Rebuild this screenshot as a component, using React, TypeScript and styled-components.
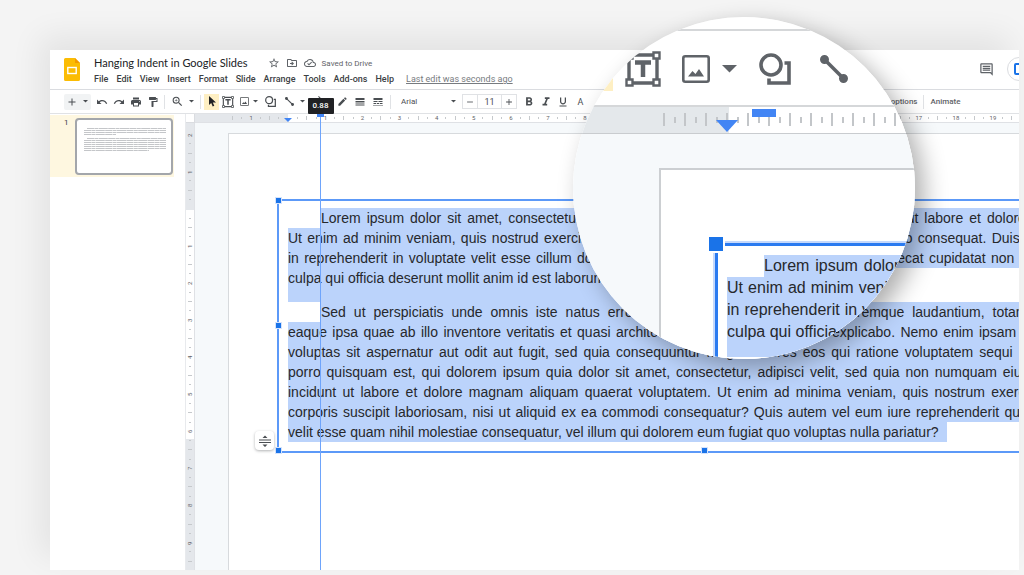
import React from "react";
import styled, { createGlobalStyle, css } from "styled-components";
import {
  MdAdd, MdRemove, MdPrint, MdFormatPaint, MdZoomIn, MdEdit, MdLineWeight,
  MdLineStyle, MdFormatBold, MdFormatItalic, MdFormatUnderlined, MdStarBorder,
  MdOutlineDriveFileMove, MdOutlineCloudDone, MdOutlineInsertComment, MdFormatColorFill,
} from "react-icons/md";

const GlobalStyle = createGlobalStyle`
  *, *::before, *::after { box-sizing: border-box; }
  body { margin: 0; background: #f4f4f4; font-family: Roboto, sans-serif; color: #3c4043; }
  button, input, select { font: inherit; color: inherit; margin: 0; padding: 0; border: 0; background: none; }
  svg { display: block; flex: none; }
`;

/* ---------- window frame ---------- */

const Page = styled.div`
  position: relative;
  display: flex;
  height: 100vh;
  padding: 50px 5px 5px 50px;
  overflow: hidden;
`;

const AppWindow = styled.div`
  flex: 1;
  min-width: 0;
  display: flex;
  flex-direction: column;
  background: #fff;
  overflow: hidden;
  box-shadow: -10px -14px 30px rgba(0, 0, 0, 0.07);
`;

/* ---------- header ---------- */

const Header = styled.header`
  display: flex;
  height: 40px;
  padding: 5px 0 0 14px;
  border-bottom: 1px solid #dadce0;
`;

const Logo = styled.a`
  padding-top: 3px;
  width: 30px;
`;

const HeaderText = styled.div`
  display: flex;
  flex-direction: column;
`;

const TitleRow = styled.div`
  display: flex;
  align-items: center;
  height: 16px;
  color: #5f6368;
`;

const DocTitle = styled.h1`
  margin: 0 20px 0 0;
  font: 400 11px/16px Lato, sans-serif;
  color: #202124;
  white-space: nowrap;
`;

const TitleButton = styled.button`
  width: 18px;
  display: flex;
`;

const SavedNote = styled.span`
  font-size: 8px;
  white-space: nowrap;
`;

const MenuBar = styled.nav`
  display: flex;
  align-items: center;
  height: 16px;
  gap: 8px;
  font-size: 9px;
  font-weight: 500;
  white-space: nowrap;
`;

const LastEdit = styled.a`
  margin-left: 4px;
  font-weight: 400;
  color: #777b80;
  text-decoration: underline;
`;

const HeaderActions = styled.div`
  display: flex;
  align-items: center;
  height: 28px;
  gap: 13px;
  margin: 0 -20px 0 auto;
  color: #5f6368;
`;

const PresentButton = styled.button`
  width: 32px;
  height: 24px;
  display: flex;
  align-items: center;
  padding-left: 6px;
  border: 1px solid #dadce0;
  border-radius: 12px;
  color: #1a73e8;
`;

/* ---------- toolbar ---------- */

const Toolbar = styled.div`
  display: flex;
  align-items: center;
  height: 24px;
  flex: none;
  padding-left: 14px;
  border-bottom: 1px solid #e0e2e5;
  color: #4a4e52;
  font-size: 9px;
`;

const Tool = styled.button<{ $w: number; $active?: boolean }>`
  width: ${(p) => p.$w}px;
  height: 16px;
  flex: none;
  display: flex;
  align-items: center;
  justify-content: center;
  ${(p) => p.$active && css`background: #feefc3; color: #202124;`}
`;

const NewSlide = styled.div`
  display: flex;
  background: #f1f3f4;
  margin-right: 2px;
  border-radius: 2px;
`;

const Divider = styled.span`
  width: 1px;
  height: 14px;
  flex: none;
  margin: 0 3px;
  background: #e0e2e5;
`;

const FontPicker = styled.label`
  display: flex;
  align-items: center;
  width: 65px;
  margin-right: 3px;
  padding: 0 3px 0 7px;
  font-size: 8px;
`;

const FontSelect = styled.select`
  appearance: none;
  flex: 1;
  min-width: 0;
`;

const SizeBox = styled.div`
  display: flex;
  align-items: center;
  width: 55px;
  height: 15px;
  margin-right: 3px;
  border: 1px solid #e0e2e5;
`;

const SizeInput = styled.input`
  width: 25px;
  height: 13px;
  text-align: center;
  font-size: 9px;
  border: solid #e0e2e5;
  border-width: 0 1px;
`;

const TextTools = styled.div`
  display: flex;
  align-items: center;
  margin-left: 270px;
  font-size: 8px;
  font-weight: 500;
  color: #5f6368;
  white-space: nowrap;
`;

const TextTool = styled.button`
  padding: 0 3px;
`;

/* ---------- workspace ---------- */

const Workspace = styled.div`
  flex: 1;
  min-height: 0;
  display: flex;
`;

const Filmstrip = styled.aside`
  width: 136px;
  flex: none;
  padding-top: 1px;
  border-right: 1px solid #e8eaed;
`;

const SlideEntry = styled.button`
  display: flex;
  width: 124px;
  height: 62px;
  padding: 3px 0 0 14px;
  font-size: 8px;
  background: #fef7e0;
  text-align: left;
`;

const Thumbnail = styled.span`
  width: 98px;
  height: 57px;
  margin-left: 6px;
  border: 2px solid #a3a6ab;
  border-radius: 4px;
  background: #fff;
`;

const Editor = styled.section`
  flex: 1;
  min-width: 0;
  display: flex;
  flex-direction: column;
`;

const TopRow = styled.div`
  display: flex;
  height: 9px;
  flex: none;
`;

const BottomRow = styled.div`
  position: relative;
  display: flex;
  flex: 1;
  min-height: 0;
`;

const Corner = styled.span`
  width: 9px;
  flex: none;
  background: #fff;
  border: solid #dadce0;
  border-width: 0 1px 1px 0;
`;

const HRuler = styled.div`
  position: relative;
  flex: 1;
  min-width: 0;
  overflow: hidden;
  padding-left: 33px;
  border-bottom: 1px solid #dfe1e5;
  background: linear-gradient(90deg, #e4e7eb 93px, #fff 93px);
`;

const HScale = styled.div`
  display: grid;
  width: 816px;
  height: 8px;
  grid-template-columns: repeat(88, 1fr);
  place-items: center;
  font-size: 6px;
  line-height: 8px;
  color: #5f6368;
`;

const VRuler = styled.div`
  width: 9px;
  flex: none;
  overflow: hidden;
  padding-top: 7px;
  border-right: 1px solid #dfe1e5;
  background: linear-gradient(#e4e7eb 87px, #fff 87px, #fff 316px, #e4e7eb 316px);
`;

const VScale = styled.div`
  display: grid;
  height: 445px;
  grid-template-rows: repeat(48, 1fr);
  place-items: center;
  font-size: 6px;
  line-height: 8px;
  color: #5f6368;
`;

const Mark = styled.i<{ $long?: boolean; $vertical?: boolean }>`
  width: ${(p) => (p.$vertical ? (p.$long ? 4 : 2) : 1)}px;
  height: ${(p) => (p.$vertical ? 1 : p.$long ? 4 : 2)}px;
  background: #c6c9cc;
`;

const Figure = styled.span<{ $vertical?: boolean }>`
  ${(p) => p.$vertical && css`
    writing-mode: vertical-rl;
    transform: rotate(180deg);
    height: 8px;
    text-align: center;
  `}
`;

const IndentHandle = styled.svg`
  position: absolute;
  left: 89px;
  top: 4px;
`;

const Canvas = styled.div`
  flex: 1;
  min-width: 0;
  padding: 10px 0 0 33px;
  background: #f6f9fb;
  display: flex;
`;

const Slide = styled.div`
  flex: 1;
  min-width: 0;
  overflow: hidden;
  padding: 65px 0 0 48px;
  background: #fff;
  border: solid #d7dadd;
  border-width: 1px 0 0 1px;
`;

const TextBox = styled.div`
  position: relative;
  width: 856px;
  height: 254px;
  padding: 7px 9px;
  border: 2px solid #5c99f8;
`;

const Handle = styled.span<{ $x: string; $y: string }>`
  position: absolute;
  left: ${(p) => p.$x};
  top: ${(p) => p.$y};
  width: 5px;
  height: 5px;
  margin: -3px 0 0 -3px;
  background: #1a73e8;
  outline: 1px solid #d5e3fc;
`;

const Paragraph = styled.p<{ $large?: boolean }>`
  margin: 0;
  width: ${(p) => (p.$large ? 934 : 834)}px;
  font-family: "Liberation Sans", Arial, sans-serif;
  font-size: ${(p) => (p.$large ? 16 : 14)}px;
  line-height: ${(p) => (p.$large ? 22 : 20)}px;
  color: #26282c;
  white-space: nowrap;
`;

const Line = styled.span<{ $indent?: number; $last?: boolean; $end?: boolean }>`
  display: block;
  margin-left: ${(p) => p.$indent ?? 0}px;
  background: #bbd3fb;
  text-align-last: justify;
  ${(p) => (p.$last || p.$end) && css`width: fit-content; padding-right: 8px; text-align-last: left;`}
  ${(p) => p.$last && css`padding-bottom: 14px;`}
`;

const SpacingButton = styled.button`
  position: absolute;
  left: 69px;
  top: 308px;
  width: 19px;
  height: 19px;
  display: grid;
  place-items: center;
  border-radius: 4px;
  background: #fff;
  box-shadow: 0 1px 3px rgba(60, 64, 67, 0.4);
`;

const Guide = styled.div`
  position: absolute;
  left: 320px;
  top: 98px;
  bottom: 5px;
  width: 1px;
  display: flex;
  flex-direction: column;
  align-items: center;
  background: #6ea4fb;
`;

const GuideValue = styled.output`
  width: 26px;
  height: 16px;
  flex: none;
  border-radius: 1px;
  background: #202124;
  color: #fff;
  font: 500 8px/16px Roboto, sans-serif;
  text-align: center;
`;

const GuideTab = styled.span`
  width: 7px;
  height: 3px;
  flex: none;
  background: #4285f4;
`;

/* ---------- magnifier ---------- */

const Lens = styled.div`
  position: absolute;
  left: 573px;
  top: 17px;
  width: 342px;
  height: 342px;
  overflow: hidden;
  border-radius: 50%;
  background: #fff;
  display: flex;
  flex-direction: column;
`;

const LensShadow = styled.div`
  position: absolute;
  left: 573px;
  top: 17px;
  width: 342px;
  height: 342px;
  border-radius: 50%;
  box-shadow: 9px 9px 24px rgba(0, 0, 0, 0.32);
`;

const LensToolbar = styled.div`
  display: flex;
  align-items: center;
  height: 78px;
  flex: none;
  margin-top: 12px;
  padding-top: 2px;
  border: solid #d5d7d9;
  border-width: 2px 0;
  color: #5f6368;
`;

const LensSelected = styled.span`
  width: 40px;
  height: 44px;
  margin-right: 12px;
  background: #feefc3;
`;

const LensIcon = styled.span<{ $gap: number }>`
  margin-right: ${(p) => p.$gap}px;
`;

const LensRuler = styled.div`
  height: 27px;
  flex: none;
  border-bottom: 1px solid #c9cccf;
  background: linear-gradient(90deg, #e4e8eb 156px, #fff 156px);
`;

const LensCanvas = styled.div`
  flex: 1;
  display: flex;
  padding: 34px 0 0 86px;
  background: #f6f9fb;
`;

const LensSlide = styled.div`
  flex: none;
  width: 1100px;
  padding: 73px 0 0 54px;
  border: solid #cccfd2;
  border-width: 2px 0 0 2px;
  background: #fff;
`;

const LensBox = styled.div`
  position: relative;
  padding: 9px 0 30px 9px;
  border: 3px solid #2b7bf0;
  outline: 2px solid #c5d9fc;
`;

const LensHandle = styled.span`
  position: absolute;
  left: -9px;
  top: -9px;
  width: 14px;
  height: 14px;
  background: #1a73e8;
  box-shadow: 0 0 0 2px #fff;
`;

/* ---------- drawings ---------- */

const Caret = ({ size = 5 }: { size?: number }) => (
  <svg width={size} height={size / 2} viewBox="0 0 10 5"><path d="M0 0h10L5 5z" fill="currentColor" /></svg>
);

const TurnIcon = ({ flip }: { flip?: boolean }) => (
  <svg width="12" height="12" viewBox="0 0 24 24">
    <path
      d="M12.500 8c-2.650 0-5.050.99-6.900 2.600L2 7v9h9l-3.620-3.620c1.390-1.160 3.160-1.880 5.120-1.880 3.540 0 6.550 2.310 7.600 5.500l2.370-.78C21.080 11.030 17.150 8 12.500 8z"
      fill="currentColor"
      transform={flip ? "translate(24 0) scale(-1 1)" : undefined}
    />
  </svg>
);

const TextBoxIcon = ({ size }: { size: number }) => (
  <svg width={size} height={size} viewBox="0 0 36 36" fill="none" stroke="currentColor">
    <path d="M8 4h20M4 8v20M8 32h20M32 8v20" strokeWidth="3.4" />
    <path d="M10 11.500h16M18 11v15" strokeWidth="4.500" />
    <path d="M1.500 1.500h6v6h-6zM28.500 1.500h6v6h-6zM1.500 28.500h6v6h-6zM28.500 28.500h6v6h-6z" strokeWidth="2.400" />
  </svg>
);

const PhotoIcon = ({ size }: { size: number }) => (
  <svg width={size} height={size} viewBox="0 0 28 28">
    <rect x="1.300" y="1.300" width="25.400" height="25.400" rx="2" fill="none" stroke="currentColor" strokeWidth="2.600" />
    <path d="M6 21.500l4.500-5.500 3 3 3.500-5 5 7.500z" fill="currentColor" />
  </svg>
);

const ShapesIcon = ({ size }: { size: number }) => (
  <svg width={size} height={size} viewBox="0 0 32 32" fill="none" stroke="currentColor" strokeWidth="3.600">
    <circle cx="12" cy="12" r="10" />
    <path d="M25.500 10h4.500v20H10v-4.500" />
  </svg>
);

const LineIcon = ({ size }: { size: number }) => (
  <svg width={size} height={size} viewBox="0 0 28 28" stroke="currentColor" strokeWidth="3.600">
    <path d="M4 4l20 20" />
    <circle cx="4.500" cy="4.500" r="2.700" fill="currentColor" />
    <circle cx="23.500" cy="23.500" r="2.700" fill="currentColor" />
  </svg>
);

const CursorIcon = () => (
  <svg width="8" height="11" viewBox="0 0 8 11"><path d="M1 0v9l2.200-2 1.500 3.500 1.600-.7L4.800 6.500H8z" fill="currentColor" /></svg>
);

const SlidesLogo = () => (
  <svg width="16" height="23" viewBox="0 0 16 23">
    <path d="M1.500 0H11l5 5v16.500a1.500 1.500 0 0 1-1.500 1.500h-13A1.500 1.500 0 0 1 0 21.500v-20A1.500 1.500 0 0 1 1.500 0z" fill="#fbbc04" />
    <path d="M11 0l5 5h-5z" fill="#f29900" />
    <rect x="3.800" y="9.500" width="8.400" height="6" fill="none" stroke="#fff" strokeWidth="1.400" />
  </svg>
);

const ThumbText = () => (
  <svg width="94" height="53" viewBox="0 0 94 53" stroke="#c4c6c9" strokeWidth="1" strokeDasharray="7 .4 4 .4 9 .4">
    <path d="M10 8.500h79M7 10.500h82M7 12.500h82M7 14.500h32M10 18.500h79M7 20.500h82M7 22.500h82M7 24.500h82M7 26.500h82M7 28.500h82M7 30.500h65" />
  </svg>
);

const SpacingIcon = () => (
  <svg width="12" height="12" viewBox="0 0 12 12" fill="#4a4e52">
    <path d="M0 4.500h12v1H0zM0 7h12v1H0zM3.500 3L6 .5 8.500 3zM3.500 9.500L6 12l2.500-2.500z" />
  </svg>
);

const LensScale = () => (
  <svg width="342" height="26" viewBox="0 0 342 26">
    <g fill="#c3c6c9">
      {Array.from({ length: 12 }, (_, i) => (
        <React.Fragment key={i}>
          <rect x={90 + i * 21} y="6" width="2" height="13" />
          <rect x={101 + i * 21} y="10" width="2" height="6" />
        </React.Fragment>
      ))}
    </g>
    <g fill="#4285f4">
      <path d="M143 13h22l-11 12z" />
      <path d="M179 2h24v8h-24z" />
    </g>
  </svg>
);

/* ---------- data ---------- */

const menus = ["File", "Edit", "View", "Insert", "Format", "Slide", "Arrange", "Tools", "Add-ons", "Help"];
const across = ["1", "", ...Array.from({ length: 20 }, (_, i) => String(i + 1))];
const down = ["2", "1", "", "1", "2", "3", "4", "5", "6", "7", "8", "9"];

const lorem = [
  "Lorem ipsum dolor sit amet, consectetur adipiscing elit, sed do eiusmod tempor incididunt ut labore et dolore magna aliqua.",
  "Ut enim ad minim veniam, quis nostrud exercitation ullamco laboris nisi ut aliquip ex ea commodo consequat. Duis aute irure dolor",
  "in reprehenderit in voluptate velit esse cillum dolore eu fugiat nulla pariatur. Excepteur sint occaecat cupidatat non proident, sunt in",
  "culpa qui officia deserunt mollit anim id est laborum.",
];

const perspiciatis = [
  "Sed ut perspiciatis unde omnis iste natus error sit voluptatem accusantium doloremque laudantium, totam rem aperiam,",
  "eaque ipsa quae ab illo inventore veritatis et quasi architecto beatae vitae dicta sunt explicabo. Nemo enim ipsam voluptatem quia",
  "voluptas sit aspernatur aut odit aut fugit, sed quia consequuntur magni dolores eos qui ratione voluptatem sequi nesciunt. Neque",
  "porro quisquam est, qui dolorem ipsum quia dolor sit amet, consectetur, adipisci velit, sed quia non numquam eius modi tempora",
  "incidunt ut labore et dolore magnam aliquam quaerat voluptatem. Ut enim ad minima veniam, quis nostrum exercitationem ullam",
  "corporis suscipit laboriosam, nisi ut aliquid ex ea commodi consequatur? Quis autem vel eum iure reprehenderit qui in ea voluptate",
  "velit esse quam nihil molestiae consequatur, vel illum qui dolorem eum fugiat quo voluptas nulla pariatur?",
];

const LoremParagraph = ({ large }: { large?: boolean }) => (
  <Paragraph $large={large}>
    {lorem.map((text, i) => (
      <Line key={text} $indent={i === 0 ? (large ? 37 : 33) : 0} $last={i === 3}>{text}</Line>
    ))}
  </Paragraph>
);

export default function App() {
  return (
    <Page>
      <GlobalStyle />
      <AppWindow>
        <Header>
          <Logo href="#" aria-label="Slides home"><SlidesLogo /></Logo>
          <HeaderText>
            <TitleRow>
              <DocTitle>Hanging Indent in Google Slides</DocTitle>
              <TitleButton aria-label="Star"><MdStarBorder size={12} /></TitleButton>
              <TitleButton aria-label="Move"><MdOutlineDriveFileMove size={12} /></TitleButton>
              <TitleButton as="span"><MdOutlineCloudDone size={12} /></TitleButton>
              <SavedNote>Saved to Drive</SavedNote>
            </TitleRow>
            <MenuBar>
              {menus.map((m) => <button key={m}>{m}</button>)}
              <LastEdit href="#">Last edit was seconds ago</LastEdit>
            </MenuBar>
          </HeaderText>
          <HeaderActions>
            <button aria-label="Comments"><MdOutlineInsertComment size={15} /></button>
            <PresentButton aria-label="Present">
              <svg width="16" height="12" viewBox="0 0 16 12"><rect x="1" y="1" width="14" height="10" rx="1" fill="none" stroke="currentColor" strokeWidth="2" /></svg>
            </PresentButton>
          </HeaderActions>
        </Header>

        <Toolbar>
          <NewSlide>
            <Tool $w={16} aria-label="New slide"><MdAdd size={12} /></Tool>
            <Tool $w={11} aria-label="Slide layouts"><Caret /></Tool>
          </NewSlide>
          <Tool $w={17} aria-label="Undo"><TurnIcon /></Tool>
          <Tool $w={17} aria-label="Redo"><TurnIcon flip /></Tool>
          <Tool $w={17} aria-label="Print"><MdPrint size={12} /></Tool>
          <Tool $w={17} aria-label="Paint format"><MdFormatPaint size={12} /></Tool>
          <Divider />
          <Tool $w={18} aria-label="Zoom"><MdZoomIn size={13} /></Tool>
          <Tool $w={11} aria-label="Zoom levels"><Caret /></Tool>
          <Divider />
          <Tool $w={15} $active aria-label="Select"><CursorIcon /></Tool>
          <Tool $w={18} aria-label="Text box"><TextBoxIcon size={12} /></Tool>
          <Tool $w={14} aria-label="Image"><PhotoIcon size={9} /></Tool>
          <Tool $w={8} aria-label="Image sources"><Caret /></Tool>
          <Tool $w={22} aria-label="Shape"><ShapesIcon size={11} /></Tool>
          <Tool $w={16} aria-label="Line"><LineIcon size={9} /></Tool>
          <Tool $w={11} aria-label="Line types"><Caret /></Tool>
          <Tool $w={26} aria-label="Fill color"><MdFormatColorFill size={12} /></Tool>
          <Tool $w={17} aria-label="Border color"><MdEdit size={11} /></Tool>
          <Tool $w={18} aria-label="Border weight"><MdLineWeight size={12} /></Tool>
          <Tool $w={18} aria-label="Border dash"><MdLineStyle size={12} /></Tool>
          <Divider />
          <FontPicker>
            <FontSelect aria-label="Font"><option>Arial</option></FontSelect>
            <Caret />
          </FontPicker>
          <SizeBox>
            <Tool $w={14} aria-label="Decrease font size"><MdRemove size={10} /></Tool>
            <SizeInput aria-label="Font size" defaultValue="11" />
            <Tool $w={14} aria-label="Increase font size"><MdAdd size={10} /></Tool>
          </SizeBox>
          <Tool $w={17} aria-label="Bold"><MdFormatBold size={14} /></Tool>
          <Tool $w={17} aria-label="Italic"><MdFormatItalic size={14} /></Tool>
          <Tool $w={17} aria-label="Underline"><MdFormatUnderlined size={12} /></Tool>
          <Tool $w={19} aria-label="Text color">A</Tool>
          <TextTools>
            <TextTool>Format options</TextTool>
            <Divider />
            <TextTool>Animate</TextTool>
          </TextTools>
        </Toolbar>

        <Workspace>
          <Filmstrip>
            <SlideEntry aria-label="Slide 1">
              1
              <Thumbnail><ThumbText /></Thumbnail>
            </SlideEntry>
          </Filmstrip>
          <Editor>
            <TopRow>
              <Corner />
              <HRuler>
                <HScale>
                  {across.map((n, i) => (
                    <React.Fragment key={i}>
                      <Mark $long /><Mark /><Figure>{n}</Figure><Mark />
                    </React.Fragment>
                  ))}
                </HScale>
                <IndentHandle width="8" height="4" viewBox="0 0 8 4"><path d="M0 0h8L4 4z" fill="#4285f4" /></IndentHandle>
              </HRuler>
            </TopRow>
            <BottomRow>
              <VRuler>
                <VScale>
                  {down.map((n, i) => (
                    <React.Fragment key={i}>
                      <Figure $vertical>{n}</Figure><Mark $vertical /><Mark $vertical $long /><Mark $vertical />
                    </React.Fragment>
                  ))}
                </VScale>
              </VRuler>
              <Canvas>
                <Slide>
                  <TextBox>
                    <LoremParagraph />
                    <Paragraph>
                      {perspiciatis.map((text, i) => (
                        <Line key={text} $indent={i === 0 ? 33 : 0} $end={i === 6}>{text}</Line>
                      ))}
                    </Paragraph>
                    <Handle $x="0" $y="0" />
                    <Handle $x="0" $y="50%" />
                    <Handle $x="0" $y="100%" />
                    <Handle $x="50%" $y="100%" />
                  </TextBox>
                </Slide>
              </Canvas>
              <SpacingButton aria-label="Autofit options"><SpacingIcon /></SpacingButton>
            </BottomRow>
          </Editor>
        </Workspace>
      </AppWindow>

      <Guide>
        <GuideValue>0.88</GuideValue>
        <GuideTab />
      </Guide>

      <LensShadow />
      <Lens>
        <LensToolbar>
          <LensSelected />
          <LensIcon $gap={21}><TextBoxIcon size={36} /></LensIcon>
          <LensIcon $gap={12}><PhotoIcon size={28} /></LensIcon>
          <LensIcon $gap={22}><Caret size={15} /></LensIcon>
          <LensIcon $gap={29}><ShapesIcon size={32} /></LensIcon>
          <LensIcon $gap={0}><LineIcon size={28} /></LensIcon>
        </LensToolbar>
        <LensRuler><LensScale /></LensRuler>
        <LensCanvas>
          <LensSlide>
            <LensBox>
              <LoremParagraph large />
              <LensHandle />
            </LensBox>
          </LensSlide>
        </LensCanvas>
      </Lens>
    </Page>
  );
}
